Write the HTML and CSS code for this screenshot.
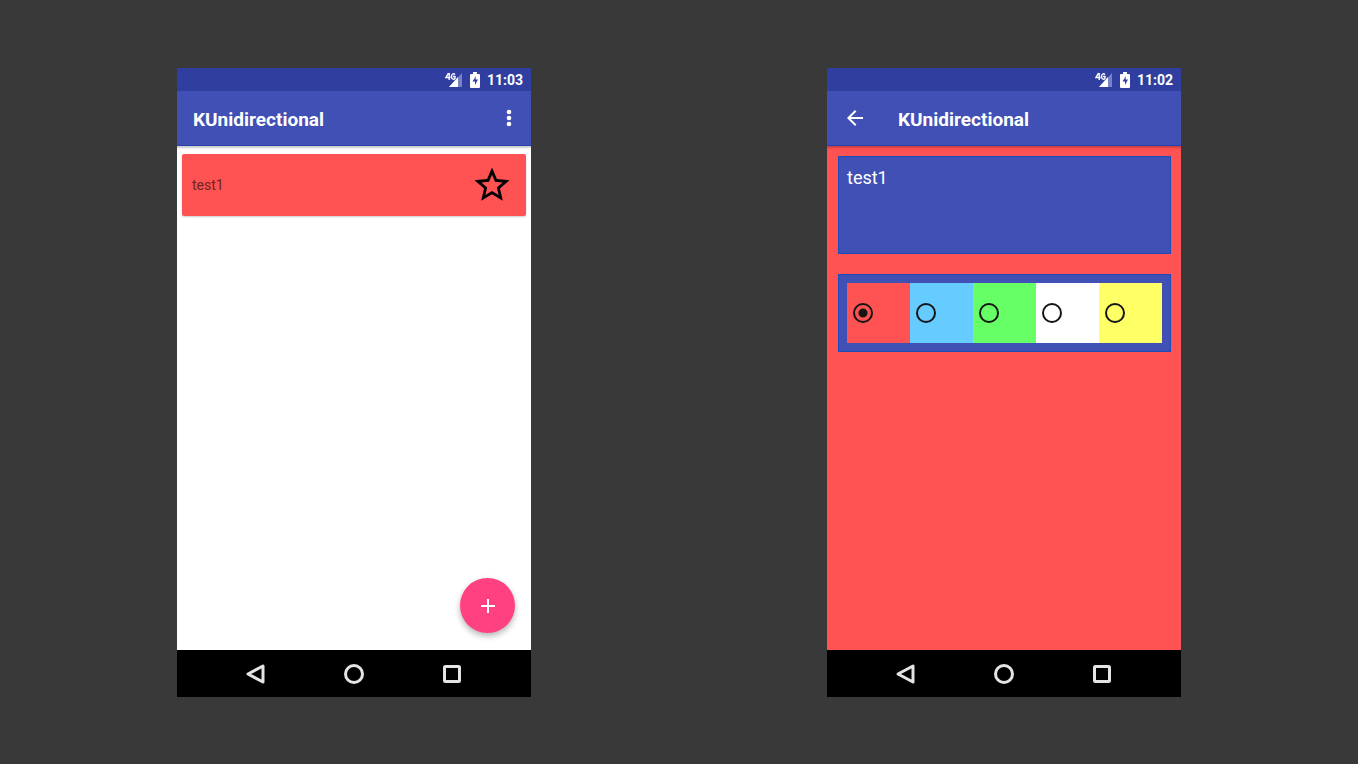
FILE: index.html
```html
<!DOCTYPE html>
<html lang="en">

<head>
    <meta charset="UTF-8">
    <meta name="viewport" content="width=device-width, initial-scale=1.0">
    <title>KUnidirectional</title>
    <link rel="stylesheet" href="styles.css">
</head>

<body>
    <main class="screens">
        <!-- Note list -->
        <section class="phone">
            <div class="status-bar">
                <svg class="signal" width="18" height="16" viewBox="0 0 18 16" aria-hidden="true">
                    <path d="M17 1v14H4z" fill="#7781c5" />
                    <path d="M13 5v10H4z" fill="#fff" />
                    <path d="M3.500 1L1 5.500h4.500M4.200 1v7M10 2.500C8.500 1 6.500 2 6.500 4.500s2 3.500 3.500 2V4.500H8" fill="none" stroke="#fff" stroke-width="1.400" />
                </svg>
                <svg class="battery" width="12" height="16" viewBox="0 0 12 16" aria-hidden="true">
                    <path d="M4 0h4v2h2q1 0 1 1v12q0 1-1 1H2q-1 0-1-1V3q0-1 1-1h2z" fill="#fff" />
                    <path d="M7 4L3.500 9.500H6V13l3-5.500H6.500z" fill="#303f9f" />
                </svg>
                <span>11:03</span>
            </div>
            <header class="toolbar">
                <h1>KUnidirectional</h1>
                <button class="icon-button menu-button" type="button" aria-label="More options">
                    <svg width="24" height="24" viewBox="0 0 24 24" fill="#fff">
                        <circle cx="12" cy="6" r="2.300" />
                        <circle cx="12" cy="12" r="2.300" />
                        <circle cx="12" cy="18" r="2.300" />
                    </svg>
                </button>
            </header>
            <div class="content list">
                <article class="card">
                    <span>test1</span>
                    <button class="icon-button" type="button" aria-label="Favorite">
                        <svg width="42" height="42" viewBox="0 0 24 24">
                            <path d="M22 9.240l-7.190-.62L12 2 9.190 8.630 2 9.240l5.460 4.730L5.820 21 12 17.270 18.180 21l-1.630-7.030L22 9.240zM12 15.400l-3.760 2.270 1-4.280-3.320-2.880 4.380-.38L12 6.100l1.710 4.040 4.380.38-3.320 2.880 1 4.280L12 15.400z" />
                        </svg>
                    </button>
                </article>
                <button class="fab" type="button" aria-label="Add note">
                    <svg width="24" height="24" viewBox="0 0 24 24">
                        <path d="M12 5v14M5 12h14" stroke="#fff" stroke-width="2" />
                    </svg>
                </button>
            </div>
            <nav class="nav-bar">
                <button class="icon-button" type="button" aria-label="Back">
                    <svg width="24" height="24" viewBox="0 0 24 24">
                        <path d="M19 4v16L4 12z" />
                    </svg>
                </button>
                <button class="icon-button" type="button" aria-label="Home">
                    <svg width="24" height="24" viewBox="0 0 24 24">
                        <circle cx="12" cy="12" r="8.500" />
                    </svg>
                </button>
                <button class="icon-button" type="button" aria-label="Recent apps">
                    <svg width="24" height="24" viewBox="0 0 24 24">
                        <rect x="4.500" y="4.500" width="15" height="15" rx="1" />
                    </svg>
                </button>
            </nav>
        </section>

        <!-- Note details -->
        <section class="phone">
            <div class="status-bar">
                <svg class="signal" width="18" height="16" viewBox="0 0 18 16" aria-hidden="true">
                    <path d="M17 1v14H4z" fill="#7781c5" />
                    <path d="M13 5v10H4z" fill="#fff" />
                    <path d="M3.500 1L1 5.500h4.500M4.200 1v7M10 2.500C8.500 1 6.500 2 6.500 4.500s2 3.500 3.500 2V4.500H8" fill="none" stroke="#fff" stroke-width="1.400" />
                </svg>
                <svg class="battery" width="12" height="16" viewBox="0 0 12 16" aria-hidden="true">
                    <path d="M4 0h4v2h2q1 0 1 1v12q0 1-1 1H2q-1 0-1-1V3q0-1 1-1h2z" fill="#fff" />
                    <path d="M7 4L3.500 9.500H6V13l3-5.500H6.500z" fill="#303f9f" />
                </svg>
                <span>11:02</span>
            </div>
            <header class="toolbar">
                <button class="icon-button" type="button" aria-label="Navigate up">
                    <svg width="24" height="24" viewBox="0 0 24 24" fill="#fff">
                        <path d="M20 11H7.830l5.590-5.590L12 4l-8 8 8 8 1.410-1.410L7.830 13H20v-2z" />
                    </svg>
                </button>
                <h1>KUnidirectional</h1>
            </header>
            <div class="content detail">
                <textarea class="note-text" aria-label="Note text">test1</textarea>
                <div class="colors" role="radiogroup" aria-label="Note color">
                    <label class="color red"><input type="radio" name="color" aria-label="Red" checked></label>
                    <label class="color blue"><input type="radio" name="color" aria-label="Blue"></label>
                    <label class="color green"><input type="radio" name="color" aria-label="Green"></label>
                    <label class="color white"><input type="radio" name="color" aria-label="White"></label>
                    <label class="color yellow"><input type="radio" name="color" aria-label="Yellow"></label>
                </div>
            </div>
            <nav class="nav-bar">
                <button class="icon-button" type="button" aria-label="Back">
                    <svg width="24" height="24" viewBox="0 0 24 24">
                        <path d="M19 4v16L4 12z" />
                    </svg>
                </button>
                <button class="icon-button" type="button" aria-label="Home">
                    <svg width="24" height="24" viewBox="0 0 24 24">
                        <circle cx="12" cy="12" r="8.500" />
                    </svg>
                </button>
                <button class="icon-button" type="button" aria-label="Recent apps">
                    <svg width="24" height="24" viewBox="0 0 24 24">
                        <rect x="4.500" y="4.500" width="15" height="15" rx="1" />
                    </svg>
                </button>
            </nav>
        </section>
    </main>
</body>

</html>
```

FILE: styles.css
```css
* {
    box-sizing: border-box;
}

body {
    margin: 0;
    background-color: #393939;
    font-family: Roboto, Arial, sans-serif;
}

.screens {
    display: grid;
    grid-template-columns: 1fr 1fr;
    gap: 296px;
    min-height: 100vh;
    padding: 68px 177px 67px;
}

.phone {
    display: flex;
    flex-direction: column;
}

.icon-button {
    display: flex;
    padding: 0;
    border: none;
    background: none;
    cursor: pointer;
}

/* Bars */
.status-bar {
    display: flex;
    align-items: center;
    justify-content: flex-end;
    gap: 6px;
    height: 23px;
    padding-right: 8px;
    background-color: #303f9f;
    color: white;
    font-size: 14px;
    font-weight: 700;
}

.toolbar {
    display: flex;
    align-items: center;
    gap: 31px;
    height: 55px;
    padding: 0 10px 0 16px;
    border-bottom: 1px solid #2742b0;
    background-color: #4150b5;
    color: white;
}

.toolbar h1 {
    margin: 0;
    padding-top: 2px;
    font-size: 19px;
    font-weight: 700;
}

.menu-button {
    margin-left: auto;
}

.nav-bar {
    display: flex;
    align-items: center;
    justify-content: center;
    gap: 74px;
    height: 47px;
    background-color: black;
}

.nav-bar svg {
    fill: none;
    stroke: #e4e4e4;
    stroke-width: 3;
    stroke-linejoin: round;
}

.content {
    position: relative;
    flex: 1;
    box-shadow: inset 0 4px 2px -2px rgba(0, 0, 0, 0.2);
}

/* List screen */
.list {
    padding: 8px 5px;
    background-color: white;
}

.card {
    display: flex;
    align-items: center;
    justify-content: space-between;
    height: 62px;
    padding: 0 13px 0 10px;
    border-radius: 2px;
    background-color: #ff5252;
    box-shadow: 0 1px 2px rgba(0, 0, 0, 0.2);
    color: #6f2424;
    font-size: 14px;
}

.fab {
    position: absolute;
    right: 16px;
    bottom: 17px;
    display: flex;
    align-items: center;
    justify-content: center;
    width: 55px;
    height: 55px;
    padding: 0;
    border: none;
    border-radius: 50%;
    background-color: #ff4081;
    box-shadow: 0 3px 6px rgba(0, 0, 0, 0.3);
    cursor: pointer;
}

/* Detail screen */
.detail {
    display: flex;
    flex-direction: column;
    gap: 20px;
    padding: 10px 10px 10px 11px;
    background-color: #ff5252;
}

.note-text {
    width: 100%;
    height: 98px;
    padding: 10px 8px;
    border: 1px solid #1c4cb8;
    border-radius: 0;
    background-color: #4150b5;
    color: white;
    font-family: inherit;
    font-size: 18px;
    resize: none;
}

.colors {
    display: grid;
    grid-template-columns: repeat(5, 1fr);
    height: 78px;
    padding: 8px;
    border: 1px solid #1c4cb8;
    background-color: #4150b5;
}

.color {
    display: flex;
    align-items: center;
    padding-left: 6px;
}

.color input {
    appearance: none;
    width: 20px;
    height: 20px;
    margin: 0;
    border: 2px solid #151515;
    border-radius: 50%;
}

.color input:checked {
    background: radial-gradient(circle, #151515 4px, transparent 5px);
}

.red {
    background-color: #ff5252;
}

.blue {
    background-color: #66ccff;
}

.green {
    background-color: #66ff66;
}

.white {
    background-color: white;
}

.yellow {
    background-color: #ffff66;
}
```
